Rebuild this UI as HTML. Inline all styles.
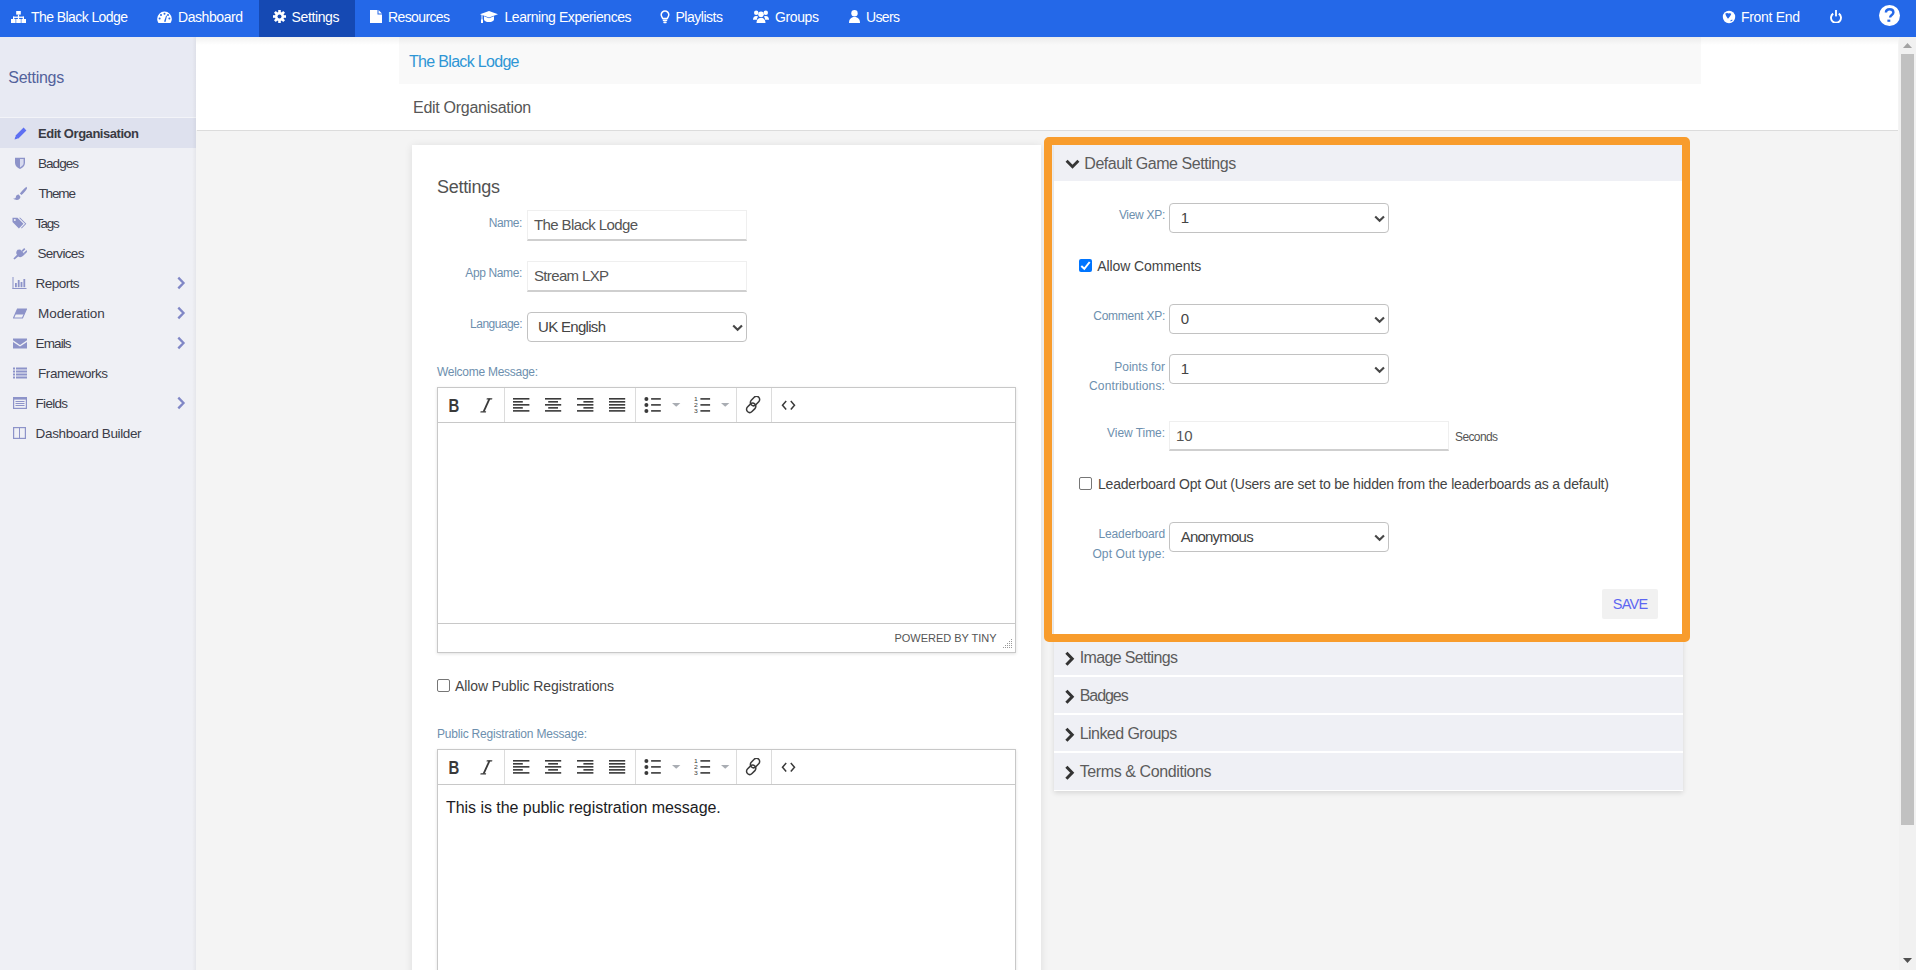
<!DOCTYPE html>
<html><head><meta charset="utf-8"><title>Edit Organisation</title>
<style>
html,body{margin:0;padding:0;width:1916px;height:970px;overflow:hidden;background:#f4f4f4;}
body{position:relative;font-family:"Liberation Sans",sans-serif;}
.t{position:absolute;white-space:nowrap;font-family:"Liberation Sans",sans-serif;}
.r{position:absolute;display:block;}
</style></head><body>
<div class="r" style="left:196px;top:37px;width:1704px;height:933px;background:#f4f4f4;"></div>
<div class="r" style="left:196px;top:37px;width:1702px;height:93px;background:#fff;"></div>
<div class="r" style="left:399px;top:37px;width:1302px;height:47px;background:#f9f9f9;"></div>
<div class="r" style="left:196px;top:37px;width:1702px;height:8px;background:linear-gradient(rgba(0,0,0,0.055),rgba(0,0,0,0));"></div>
<div class="r" style="left:197px;top:130px;width:1701px;height:1px;background:#dcdcdc;"></div>
<div class="t" style="left:409px;top:52.00px;font-size:16px;line-height:19px;color:#2e96d5;letter-spacing:-0.684px;">The Black Lodge</div>
<div class="t" style="left:413px;top:97.80px;font-size:16px;line-height:19px;color:#575757;letter-spacing:-0.284px;">Edit Organisation</div>
<div class="r" style="left:412px;top:145px;width:629px;height:900px;background:#fff;box-shadow:0 1px 8px rgba(0,0,0,0.10);"></div>
<div class="t" style="left:437px;top:175.60px;font-size:18px;line-height:22px;color:#525252;letter-spacing:-0.292px;">Settings</div>
<div class="t" style="right:1394px;top:215.60px;font-size:12px;line-height:14px;color:#6d8fae;letter-spacing:-0.436px;">Name:</div>
<div class="t" style="right:1394px;top:266.20px;font-size:12px;line-height:14px;color:#6d8fae;letter-spacing:-0.377px;">App Name:</div>
<div class="t" style="right:1394px;top:317.00px;font-size:12px;line-height:14px;color:#6d8fae;letter-spacing:-0.538px;">Language:</div>
<div class="r" style="left:527px;top:210px;width:220px;height:31px;background:#fff;box-sizing:border-box;border:1px solid #efefef;border-bottom:2px solid #cfcfcf;"></div>
<div class="r" style="left:527px;top:261px;width:220px;height:31px;background:#fff;box-sizing:border-box;border:1px solid #efefef;border-bottom:2px solid #cfcfcf;"></div>
<div class="r" style="left:527px;top:312px;width:220px;height:30px;background:#fff;box-sizing:border-box;border:1px solid #c2c2c2;border-radius:4px;"></div>
<div class="t" style="left:534px;top:215.70px;font-size:15px;line-height:18px;color:#555;letter-spacing:-0.613px;">The Black Lodge</div>
<div class="t" style="left:534px;top:266.70px;font-size:15px;line-height:18px;color:#555;letter-spacing:-0.653px;">Stream LXP</div>
<div class="t" style="left:538px;top:318.00px;font-size:15px;line-height:18px;color:#444;letter-spacing:-0.688px;">UK English</div>
<svg class="r" style="left:731.5px;top:323.5px;" width="11" height="8" viewBox="0 0 11 8"><path fill="none" stroke="#474747" stroke-width="2.1" d="M1.2 1.4l4.4 4.4 4.4-4.4"/></svg>
<div class="t" style="left:437px;top:365.30px;font-size:12px;line-height:14px;color:#6d8fae;letter-spacing:-0.276px;">Welcome Message:</div>
<div class="r" style="left:437px;top:387px;width:579px;height:266px;background:#fff;box-sizing:border-box;border:1px solid #c8c8c8;box-shadow:0 1px 3px rgba(0,0,0,0.12);"></div>
<div class="r" style="left:438px;top:422px;width:577px;height:1px;background:#c8c8c8;"></div>
<div class="r" style="left:504px;top:388px;width:1px;height:34px;background:#dcdcdc;"></div>
<div class="r" style="left:635px;top:388px;width:1px;height:34px;background:#dcdcdc;"></div>
<div class="r" style="left:736px;top:388px;width:1px;height:34px;background:#dcdcdc;"></div>
<div class="r" style="left:771px;top:388px;width:1px;height:34px;background:#dcdcdc;"></div>
<svg class="r" style="left:448px;top:397px;" width="13" height="16" viewBox="0 0 13 16"><text x="0.6" y="14.8" font-size="18.5" font-weight="700" fill="#3a3a3a" font-family="Liberation Sans" textLength="10.8" lengthAdjust="spacingAndGlyphs">B</text></svg>
<svg class="r" style="left:480px;top:397px;" width="13" height="16" viewBox="0 0 13 16"><g fill="#3a3a3a"><path d="M6.8 1.2h5.6l-0.3 1.3h-5.6z"/><path d="M0.6 14.2h5.6l-0.3 1.3h-5.6z"/><path d="M8.6 1.6h2l-6 13.2h-2z"/></g></svg>
<svg class="r" style="left:513.4px;top:398.2px;" width="17" height="15" viewBox="0 0 17 15"><g fill="#3a3a3a"><rect x="0" y="0.0" width="16.4" height="1.6"/><rect x="0" y="3.02" width="9.8" height="1.6"/><rect x="0" y="6.04" width="16.4" height="1.6"/><rect x="0" y="9.06" width="9.8" height="1.6"/><rect x="0" y="12.08" width="16.4" height="1.6"/></g></svg>
<svg class="r" style="left:545.4px;top:398.2px;" width="17" height="15" viewBox="0 0 17 15"><g fill="#3a3a3a"><rect x="0" y="0.0" width="16.2" height="1.6"/><rect x="3.2" y="3.02" width="9.8" height="1.6"/><rect x="0" y="6.04" width="16.2" height="1.6"/><rect x="3.2" y="9.06" width="9.8" height="1.6"/><rect x="0" y="12.08" width="16.2" height="1.6"/></g></svg>
<svg class="r" style="left:577.4px;top:398.2px;" width="17" height="15" viewBox="0 0 17 15"><g fill="#3a3a3a"><rect x="0" y="0.0" width="16.4" height="1.6"/><rect x="6.4" y="3.02" width="10" height="1.6"/><rect x="0" y="6.04" width="16.4" height="1.6"/><rect x="6.4" y="9.06" width="10" height="1.6"/><rect x="0" y="12.08" width="16.4" height="1.6"/></g></svg>
<svg class="r" style="left:609.4px;top:398.2px;" width="17" height="15" viewBox="0 0 17 15"><g fill="#3a3a3a"><rect x="0" y="0.0" width="16.2" height="1.6"/><rect x="0" y="3.02" width="16.2" height="1.6"/><rect x="0" y="6.04" width="16.2" height="1.6"/><rect x="0" y="9.06" width="16.2" height="1.6"/><rect x="0" y="12.08" width="16.2" height="1.6"/></g></svg>
<svg class="r" style="left:644px;top:396px;" width="18" height="17" viewBox="0 0 18 17"><g fill="#3a3a3a"><circle cx="2.4" cy="2.9" r="2"/><circle cx="2.4" cy="8.9" r="2"/><circle cx="2.4" cy="14.9" r="2"/><rect x="7.1" y="2.1" width="9.7" height="1.6"/><rect x="7.1" y="8.1" width="9.7" height="1.6"/><rect x="7.1" y="14.1" width="9.7" height="1.6"/></g></svg>
<svg class="r" style="left:672px;top:403px;" width="9" height="4" viewBox="0 0 9 4"><path fill="#a9adb3" d="M0 0h8.4L4.2 3.7z"/></svg>
<svg class="r" style="left:693.5px;top:396px;" width="17" height="17" viewBox="0 0 17 17"><g fill="#3a3a3a"><rect x="6.4" y="2.1" width="9.7" height="1.6"/><rect x="6.4" y="8.1" width="9.7" height="1.6"/><rect x="6.4" y="14.1" width="9.7" height="1.6"/></g><text x="0" y="4.6" font-size="6.2" fill="#3a3a3a" font-family="Liberation Sans" textLength="3.8" lengthAdjust="spacingAndGlyphs">1</text><text x="0" y="10.6" font-size="6.2" fill="#3a3a3a" font-family="Liberation Sans" textLength="3.8" lengthAdjust="spacingAndGlyphs">2</text><text x="0" y="16.6" font-size="6.2" fill="#3a3a3a" font-family="Liberation Sans" textLength="3.8" lengthAdjust="spacingAndGlyphs">3</text></svg>
<svg class="r" style="left:721px;top:403px;" width="9" height="4" viewBox="0 0 9 4"><path fill="#a9adb3" d="M0 0h8.4L4.2 3.7z"/></svg>
<svg class="r" style="left:744px;top:396px;" width="19" height="18" viewBox="0 0 19 18"><g fill="none" stroke="#3a3a3a" stroke-width="1.5"><rect x="-3.2" y="-2" width="6.4" height="10.5" rx="3.2" transform="translate(12.6 3.4) rotate(45) translate(0 -1)"/><rect x="-3.2" y="-8.5" width="6.4" height="10.5" rx="3.2" transform="translate(5.6 13.4) rotate(45) translate(0 1)"/></g></svg>
<svg class="r" style="left:781px;top:400px;" width="15" height="11" viewBox="0 0 15 11"><g fill="none" stroke="#3a3a3a" stroke-width="1.5"><path d="M5.2 1L1.5 5.2l3.7 4.2"/><path d="M9.8 1l3.7 4.2-3.7 4.2"/></g></svg>
<div class="r" style="left:438px;top:623px;width:577px;height:1px;background:#c8c8c8;"></div>
<div class="t" style="left:894.5px;top:631.50px;font-size:11px;line-height:13px;color:#555;letter-spacing:-0.022px;">POWERED BY TINY</div>
<svg class="r" style="left:1003px;top:639px;" width="10" height="10" viewBox="0 0 10 10"><g fill="#999"><rect x="8" y="8" width="1" height="1"/><rect x="6" y="8" width="1" height="1"/><rect x="4" y="8" width="1" height="1"/><rect x="2" y="8" width="1" height="1"/><rect x="0" y="8" width="1" height="1"/><rect x="8" y="6" width="1" height="1"/><rect x="6" y="6" width="1" height="1"/><rect x="4" y="6" width="1" height="1"/><rect x="2" y="6" width="1" height="1"/><rect x="8" y="4" width="1" height="1"/><rect x="6" y="4" width="1" height="1"/><rect x="4" y="4" width="1" height="1"/><rect x="8" y="2" width="1" height="1"/><rect x="6" y="2" width="1" height="1"/><rect x="8" y="0" width="1" height="1"/></g></svg>
<div class="r" style="left:437px;top:679px;width:13px;height:13px;background:#fff;box-sizing:border-box;border:1px solid #767676;border-radius:2px;"></div>
<div class="t" style="left:455px;top:677.80px;font-size:14px;line-height:17px;color:#444;letter-spacing:-0.081px;">Allow Public Registrations</div>
<div class="t" style="left:437px;top:727.30px;font-size:12px;line-height:14px;color:#6d8fae;letter-spacing:-0.200px;">Public Registration Message:</div>
<div class="r" style="left:437px;top:749px;width:579px;height:300px;background:#fff;box-sizing:border-box;border:1px solid #c8c8c8;box-shadow:0 1px 3px rgba(0,0,0,0.12);"></div>
<div class="r" style="left:438px;top:784px;width:577px;height:1px;background:#c8c8c8;"></div>
<div class="r" style="left:504px;top:750px;width:1px;height:34px;background:#dcdcdc;"></div>
<div class="r" style="left:635px;top:750px;width:1px;height:34px;background:#dcdcdc;"></div>
<div class="r" style="left:736px;top:750px;width:1px;height:34px;background:#dcdcdc;"></div>
<div class="r" style="left:771px;top:750px;width:1px;height:34px;background:#dcdcdc;"></div>
<svg class="r" style="left:448px;top:759px;" width="13" height="16" viewBox="0 0 13 16"><text x="0.6" y="14.8" font-size="18.5" font-weight="700" fill="#3a3a3a" font-family="Liberation Sans" textLength="10.8" lengthAdjust="spacingAndGlyphs">B</text></svg>
<svg class="r" style="left:480px;top:759px;" width="13" height="16" viewBox="0 0 13 16"><g fill="#3a3a3a"><path d="M6.8 1.2h5.6l-0.3 1.3h-5.6z"/><path d="M0.6 14.2h5.6l-0.3 1.3h-5.6z"/><path d="M8.6 1.6h2l-6 13.2h-2z"/></g></svg>
<svg class="r" style="left:513.4px;top:760.2px;" width="17" height="15" viewBox="0 0 17 15"><g fill="#3a3a3a"><rect x="0" y="0.0" width="16.4" height="1.6"/><rect x="0" y="3.02" width="9.8" height="1.6"/><rect x="0" y="6.04" width="16.4" height="1.6"/><rect x="0" y="9.06" width="9.8" height="1.6"/><rect x="0" y="12.08" width="16.4" height="1.6"/></g></svg>
<svg class="r" style="left:545.4px;top:760.2px;" width="17" height="15" viewBox="0 0 17 15"><g fill="#3a3a3a"><rect x="0" y="0.0" width="16.2" height="1.6"/><rect x="3.2" y="3.02" width="9.8" height="1.6"/><rect x="0" y="6.04" width="16.2" height="1.6"/><rect x="3.2" y="9.06" width="9.8" height="1.6"/><rect x="0" y="12.08" width="16.2" height="1.6"/></g></svg>
<svg class="r" style="left:577.4px;top:760.2px;" width="17" height="15" viewBox="0 0 17 15"><g fill="#3a3a3a"><rect x="0" y="0.0" width="16.4" height="1.6"/><rect x="6.4" y="3.02" width="10" height="1.6"/><rect x="0" y="6.04" width="16.4" height="1.6"/><rect x="6.4" y="9.06" width="10" height="1.6"/><rect x="0" y="12.08" width="16.4" height="1.6"/></g></svg>
<svg class="r" style="left:609.4px;top:760.2px;" width="17" height="15" viewBox="0 0 17 15"><g fill="#3a3a3a"><rect x="0" y="0.0" width="16.2" height="1.6"/><rect x="0" y="3.02" width="16.2" height="1.6"/><rect x="0" y="6.04" width="16.2" height="1.6"/><rect x="0" y="9.06" width="16.2" height="1.6"/><rect x="0" y="12.08" width="16.2" height="1.6"/></g></svg>
<svg class="r" style="left:644px;top:758px;" width="18" height="17" viewBox="0 0 18 17"><g fill="#3a3a3a"><circle cx="2.4" cy="2.9" r="2"/><circle cx="2.4" cy="8.9" r="2"/><circle cx="2.4" cy="14.9" r="2"/><rect x="7.1" y="2.1" width="9.7" height="1.6"/><rect x="7.1" y="8.1" width="9.7" height="1.6"/><rect x="7.1" y="14.1" width="9.7" height="1.6"/></g></svg>
<svg class="r" style="left:672px;top:765px;" width="9" height="4" viewBox="0 0 9 4"><path fill="#a9adb3" d="M0 0h8.4L4.2 3.7z"/></svg>
<svg class="r" style="left:693.5px;top:758px;" width="17" height="17" viewBox="0 0 17 17"><g fill="#3a3a3a"><rect x="6.4" y="2.1" width="9.7" height="1.6"/><rect x="6.4" y="8.1" width="9.7" height="1.6"/><rect x="6.4" y="14.1" width="9.7" height="1.6"/></g><text x="0" y="4.6" font-size="6.2" fill="#3a3a3a" font-family="Liberation Sans" textLength="3.8" lengthAdjust="spacingAndGlyphs">1</text><text x="0" y="10.6" font-size="6.2" fill="#3a3a3a" font-family="Liberation Sans" textLength="3.8" lengthAdjust="spacingAndGlyphs">2</text><text x="0" y="16.6" font-size="6.2" fill="#3a3a3a" font-family="Liberation Sans" textLength="3.8" lengthAdjust="spacingAndGlyphs">3</text></svg>
<svg class="r" style="left:721px;top:765px;" width="9" height="4" viewBox="0 0 9 4"><path fill="#a9adb3" d="M0 0h8.4L4.2 3.7z"/></svg>
<svg class="r" style="left:744px;top:758px;" width="19" height="18" viewBox="0 0 19 18"><g fill="none" stroke="#3a3a3a" stroke-width="1.5"><rect x="-3.2" y="-2" width="6.4" height="10.5" rx="3.2" transform="translate(12.6 3.4) rotate(45) translate(0 -1)"/><rect x="-3.2" y="-8.5" width="6.4" height="10.5" rx="3.2" transform="translate(5.6 13.4) rotate(45) translate(0 1)"/></g></svg>
<svg class="r" style="left:781px;top:762px;" width="15" height="11" viewBox="0 0 15 11"><g fill="none" stroke="#3a3a3a" stroke-width="1.5"><path d="M5.2 1L1.5 5.2l3.7 4.2"/><path d="M9.8 1l3.7 4.2-3.7 4.2"/></g></svg>
<div class="t" style="left:446px;top:798.40px;font-size:16px;line-height:19px;color:#1c1c24;letter-spacing:-0.046px;">This is the public registration message.</div>
<div class="r" style="left:1054px;top:141px;width:629px;height:650px;background:#fff;box-shadow:0 2px 5px rgba(0,0,0,0.12);"></div>
<div class="r" style="left:1054px;top:141px;width:629px;height:40px;background:#eff0f5;"></div>
<div class="r" style="left:1054px;top:634px;width:629px;height:41px;background:#eff0f5;"></div>
<div class="t" style="left:1079.7px;top:648.00px;font-size:16px;line-height:19px;color:#5c5c5c;letter-spacing:-0.655px;">Image Settings</div>
<svg class="r" style="left:1063.5px;top:650.5px;" width="12" height="16" viewBox="0 0 12 16"><path fill="none" stroke="#333" stroke-width="3" d="M2.4 1.8l5.8 6-5.8 6"/></svg>
<div class="r" style="left:1054px;top:677px;width:629px;height:36px;background:#eff0f5;"></div>
<div class="t" style="left:1079.7px;top:686.00px;font-size:16px;line-height:19px;color:#5c5c5c;letter-spacing:-1.059px;">Badges</div>
<svg class="r" style="left:1063.5px;top:688.5px;" width="12" height="16" viewBox="0 0 12 16"><path fill="none" stroke="#333" stroke-width="3" d="M2.4 1.8l5.8 6-5.8 6"/></svg>
<div class="r" style="left:1054px;top:715px;width:629px;height:36px;background:#eff0f5;"></div>
<div class="t" style="left:1079.7px;top:724.00px;font-size:16px;line-height:19px;color:#5c5c5c;letter-spacing:-0.545px;">Linked Groups</div>
<svg class="r" style="left:1063.5px;top:726.5px;" width="12" height="16" viewBox="0 0 12 16"><path fill="none" stroke="#333" stroke-width="3" d="M2.4 1.8l5.8 6-5.8 6"/></svg>
<div class="r" style="left:1054px;top:753px;width:629px;height:37px;background:#eff0f5;"></div>
<div class="t" style="left:1079.7px;top:762.00px;font-size:16px;line-height:19px;color:#5c5c5c;letter-spacing:-0.402px;">Terms &amp; Conditions</div>
<svg class="r" style="left:1063.5px;top:764.5px;" width="12" height="16" viewBox="0 0 12 16"><path fill="none" stroke="#333" stroke-width="3" d="M2.4 1.8l5.8 6-5.8 6"/></svg>
<svg class="r" style="left:1064.5px;top:159px;" width="15" height="11" viewBox="0 0 15 11"><path fill="none" stroke="#363636" stroke-width="2.9" d="M1.6 1.8l5.9 5.9 5.9-5.9"/></svg>
<div class="t" style="left:1084.3px;top:154.20px;font-size:16px;line-height:19px;color:#5c5c5c;letter-spacing:-0.455px;">Default Game Settings</div>
<div class="t" style="right:751px;top:208.40px;font-size:12px;line-height:14px;color:#6d8fae;letter-spacing:-0.293px;">View XP:</div>
<div class="r" style="left:1169px;top:203px;width:220px;height:30px;background:#fff;box-sizing:border-box;border:1px solid #c2c2c2;border-radius:4px;"></div>
<div class="t" style="left:1180.7px;top:208.70px;font-size:15px;line-height:18px;color:#444;">1</div>
<svg class="r" style="left:1373.5px;top:214.5px;" width="11" height="8" viewBox="0 0 11 8"><path fill="none" stroke="#474747" stroke-width="2.1" d="M1.2 1.4l4.4 4.4 4.4-4.4"/></svg>
<div class="r" style="left:1079px;top:259px;width:13px;height:13px;background:#0075ff;border-radius:2px;"></div>
<svg class="r" style="left:1079px;top:259px;" width="13" height="13" viewBox="0 0 13 13"><path fill="none" stroke="#fff" stroke-width="2" d="M2.3 7.1l3 2.7 5.4-6.8"/></svg>
<div class="t" style="left:1097.2px;top:257.80px;font-size:14px;line-height:17px;color:#444;letter-spacing:-0.077px;">Allow Comments</div>
<div class="t" style="right:751px;top:308.70px;font-size:12px;line-height:14px;color:#6d8fae;letter-spacing:-0.267px;">Comment XP:</div>
<div class="r" style="left:1169px;top:304px;width:220px;height:30px;background:#fff;box-sizing:border-box;border:1px solid #c2c2c2;border-radius:4px;"></div>
<div class="t" style="left:1180.7px;top:309.70px;font-size:15px;line-height:18px;color:#444;">0</div>
<svg class="r" style="left:1373.5px;top:315.5px;" width="11" height="8" viewBox="0 0 11 8"><path fill="none" stroke="#474747" stroke-width="2.1" d="M1.2 1.4l4.4 4.4 4.4-4.4"/></svg>
<div class="t" style="right:751px;top:359.50px;font-size:12px;line-height:14px;color:#6d8fae;letter-spacing:0.003px;">Points for</div>
<div class="t" style="right:751px;top:379.00px;font-size:12px;line-height:14px;color:#6d8fae;letter-spacing:0.136px;">Contributions:</div>
<div class="r" style="left:1169px;top:354px;width:220px;height:30px;background:#fff;box-sizing:border-box;border:1px solid #c2c2c2;border-radius:4px;"></div>
<div class="t" style="left:1180.7px;top:359.70px;font-size:15px;line-height:18px;color:#444;">1</div>
<svg class="r" style="left:1373.5px;top:365.5px;" width="11" height="8" viewBox="0 0 11 8"><path fill="none" stroke="#474747" stroke-width="2.1" d="M1.2 1.4l4.4 4.4 4.4-4.4"/></svg>
<div class="t" style="right:751px;top:426.40px;font-size:12px;line-height:14px;color:#6d8fae;letter-spacing:-0.052px;">View Time:</div>
<div class="r" style="left:1169px;top:421px;width:280px;height:30px;background:#fff;box-sizing:border-box;border:1px solid #efefef;border-bottom:2px solid #cfcfcf;"></div>
<div class="t" style="left:1176px;top:426.50px;font-size:15px;line-height:18px;color:#555;">10</div>
<div class="t" style="left:1455px;top:429.50px;font-size:12px;line-height:14px;color:#555;letter-spacing:-0.615px;">Seconds</div>
<div class="r" style="left:1079px;top:477px;width:13px;height:13px;background:#fff;box-sizing:border-box;border:1px solid #767676;border-radius:2px;"></div>
<div class="t" style="left:1098px;top:475.80px;font-size:14px;line-height:17px;color:#444;letter-spacing:-0.194px;">Leaderboard Opt Out (Users are set to be hidden from the leaderboards as a default)</div>
<div class="t" style="right:751px;top:527.00px;font-size:12px;line-height:14px;color:#6d8fae;letter-spacing:-0.145px;">Leaderboard</div>
<div class="t" style="right:751px;top:546.80px;font-size:12px;line-height:14px;color:#6d8fae;letter-spacing:0.091px;">Opt Out type:</div>
<div class="r" style="left:1169px;top:522px;width:220px;height:30px;background:#fff;box-sizing:border-box;border:1px solid #c2c2c2;border-radius:4px;"></div>
<div class="t" style="left:1180.7px;top:527.70px;font-size:15px;line-height:18px;color:#444;letter-spacing:-0.777px;">Anonymous</div>
<svg class="r" style="left:1373.5px;top:533.5px;" width="11" height="8" viewBox="0 0 11 8"><path fill="none" stroke="#474747" stroke-width="2.1" d="M1.2 1.4l4.4 4.4 4.4-4.4"/></svg>
<div class="r" style="left:1602px;top:589px;width:56px;height:30px;background:#f1f1f1;border-radius:2px;"></div>
<div class="t" style="left:1612.7px;top:595.80px;font-size:14.5px;line-height:17px;color:#5d66f2;letter-spacing:-0.704px;">SAVE</div>
<div class="r" style="left:1044px;top:137px;width:646px;height:505px;background:transparent;box-sizing:border-box;border:8px solid #f89c2c;border-radius:5px;"></div>
<div class="r" style="left:1899px;top:37px;width:17px;height:933px;background:#f1f1f1;"></div>
<div class="r" style="left:1901px;top:54px;width:13px;height:771px;background:#c1c1c1;"></div>
<svg class="r" style="left:1903px;top:43px;" width="9" height="6" viewBox="0 0 9 6"><path fill="#a3a3a3" d="M0 5h9L4.5 0z"/></svg>
<svg class="r" style="left:1903px;top:958px;" width="9" height="6" viewBox="0 0 9 6"><path fill="#505050" d="M0 0h9L4.5 5z"/></svg>
<div class="r" style="left:0px;top:37px;width:196px;height:933px;background:#eff0f5;"></div>
<div class="r" style="left:0px;top:37px;width:196px;height:80px;background:#e8eaf3;"></div>
<div class="r" style="left:0px;top:117px;width:196px;height:1px;background:#f3f4f8;"></div>
<div class="r" style="left:0px;top:118px;width:196px;height:30px;background:#dee1ee;"></div>
<div class="r" style="left:192px;top:37px;width:4px;height:933px;background:linear-gradient(90deg,rgba(0,0,0,0),rgba(0,0,0,0.045));"></div>
<div class="t" style="left:8.3px;top:68.20px;font-size:16px;line-height:19px;color:#53629b;letter-spacing:-0.266px;">Settings</div>
<div class="t" style="left:38px;top:125.50px;font-size:13px;line-height:16px;color:#3a3b44;font-weight:700;letter-spacing:-0.458px;">Edit Organisation</div>
<div class="t" style="left:38px;top:155.50px;font-size:13.5px;line-height:16px;color:#3b3c48;letter-spacing:-0.957px;">Badges</div>
<div class="t" style="left:38.4px;top:185.50px;font-size:13.5px;line-height:16px;color:#3b3c48;letter-spacing:-1.103px;">Theme</div>
<div class="t" style="left:35.2px;top:215.50px;font-size:13.5px;line-height:16px;color:#3b3c48;letter-spacing:-1.338px;">Tags</div>
<div class="t" style="left:37.4px;top:245.50px;font-size:13.5px;line-height:16px;color:#3b3c48;letter-spacing:-0.681px;">Services</div>
<div class="t" style="left:35.6px;top:275.50px;font-size:13.5px;line-height:16px;color:#3b3c48;letter-spacing:-0.544px;">Reports</div>
<div class="t" style="left:38.1px;top:305.50px;font-size:13.5px;line-height:16px;color:#3b3c48;letter-spacing:-0.093px;">Moderation</div>
<div class="t" style="left:35.6px;top:335.50px;font-size:13.5px;line-height:16px;color:#3b3c48;letter-spacing:-0.901px;">Emails</div>
<div class="t" style="left:38.1px;top:365.50px;font-size:13.5px;line-height:16px;color:#3b3c48;letter-spacing:-0.472px;">Frameworks</div>
<div class="t" style="left:35.6px;top:395.50px;font-size:13.5px;line-height:16px;color:#3b3c48;letter-spacing:-0.722px;">Fields</div>
<div class="t" style="left:35.6px;top:425.50px;font-size:13.5px;line-height:16px;color:#3b3c48;letter-spacing:-0.363px;">Dashboard Builder</div>
<svg class="r" style="left:14px;top:127px;" width="13" height="13" viewBox="0 0 13 13"><path fill="#5d6ff2" d="M9.6 0.6l2.8 2.8-8 8H1.6V8.6z M0.6 12.4l0.6-2.6 2 2z"/></svg>
<svg class="r" style="left:15px;top:157px;" width="10" height="12" viewBox="0 0 10 12"><path fill="#8d93c9" d="M0 0.7h10v5.3c0 3-2.6 5-5 6-2.4-1-5-3-5-6z"/><path fill="#d8dbef" d="M5 1.9h3.6v4.1c0 2-1.6 3.5-3.6 4.4z"/></svg>
<svg class="r" style="left:13px;top:186px;" width="14" height="14" viewBox="0 0 14 14"><path fill="#8d93c9" d="M13.5 0.8c-1.8 1.2-5 4.5-6.6 6.8l1.6 1.4c2.2-1.8 5-5 5.6-6.8z M5.8 8.4c-1.8 0-3 1.4-3 2.8 0 .8-.8 1.4-2.6 1.4 1 1 2.4 1.4 3.6 1.4 2.2 0 3.6-1.4 3.6-3.2z"/></svg>
<svg class="r" style="left:12px;top:217px;" width="15" height="12" viewBox="0 0 15 12"><path fill="#8d93c9" d="M0.5 0.8h5l6 6-4.6 4.6-6.4-6.4z M7 0.8h1.3l6 6-4.6 4.6-0.6-.6 4-4z"/><circle cx="2.8" cy="3" r="1" fill="#eff0f5"/></svg>
<svg class="r" style="left:13px;top:247px;" width="14" height="13" viewBox="0 0 14 13"><g fill="#8d93c9"><path d="M7.2 2.6l4.6 4.6-1.6 1.6c-1.6 1.6-3.6 1.8-5 .6L1.6 12.6.4 11.4l3.6-3.6c-1.2-1.4-1-3.4.6-5z"/><path d="M8.4 3.8l2.8-2.8 1.2 1.2-2.8 2.8z"/><path d="M10.6 6l2.8-2.8 1.2 1.2-2.8 2.8z"/></g></svg>
<svg class="r" style="left:12px;top:277px;" width="15" height="12" viewBox="0 0 15 12"><g fill="#8d93c9"><rect x="0.5" y="0" width="1" height="12"/><rect x="0.5" y="11" width="14" height="1"/><rect x="3" y="6" width="1.8" height="4.2"/><rect x="5.8" y="3" width="1.8" height="7.2"/><rect x="8.6" y="5" width="1.8" height="5.2"/><rect x="11.4" y="2" width="1.8" height="8.2"/></g></svg>
<svg class="r" style="left:13px;top:308px;" width="14" height="11" viewBox="0 0 14 11"><path fill="none" stroke="#8d93c9" stroke-width="1.2" d="M4.5 1h9l-4 9h-9z"/><path fill="#8d93c9" d="M4.5 1h9l-2.4 5.4h-9z"/></svg>
<svg class="r" style="left:13px;top:338px;" width="14" height="11" viewBox="0 0 14 11"><path fill="#8d93c9" d="M0 0.5h14v1.8l-7 4.6-7-4.6z M0 4l7 4.6 7-4.6v6.5h-14z"/></svg>
<svg class="r" style="left:13px;top:367px;" width="14" height="12" viewBox="0 0 14 12"><g fill="#8d93c9"><rect x="0" y="0.5" width="2" height="2"/><rect x="3" y="0.5" width="11" height="2"/><rect x="0" y="3.5" width="2" height="2"/><rect x="3" y="3.5" width="11" height="2"/><rect x="0" y="6.5" width="2" height="2"/><rect x="3" y="6.5" width="11" height="2"/><rect x="0" y="9.5" width="2" height="2"/><rect x="3" y="9.5" width="11" height="2"/></g></svg>
<svg class="r" style="left:13px;top:397px;" width="14" height="12" viewBox="0 0 14 12"><rect x="0.6" y="0.6" width="12.8" height="10.8" fill="none" stroke="#8d93c9" stroke-width="1.2"/><g fill="#8d93c9"><rect x="0" y="0" width="14" height="2.6"/><rect x="2.5" y="4" width="9" height="1"/><rect x="2.5" y="6" width="9" height="1"/><rect x="2.5" y="8" width="9" height="1"/></g></svg>
<svg class="r" style="left:13px;top:427px;" width="13" height="12" viewBox="0 0 13 12"><rect x="0.6" y="0.6" width="11.8" height="10.8" fill="none" stroke="#8d93c9" stroke-width="1.2"/><rect x="6" y="0.6" width="1" height="10.8" fill="#8d93c9"/></svg>
<svg class="r" style="left:176px;top:276px;" width="10" height="14" viewBox="0 0 10 14"><path fill="none" stroke="#8087c6" stroke-width="2.3" d="M2.3 1.6l5.2 5.4-5.2 5.4"/></svg>
<svg class="r" style="left:176px;top:306px;" width="10" height="14" viewBox="0 0 10 14"><path fill="none" stroke="#8087c6" stroke-width="2.3" d="M2.3 1.6l5.2 5.4-5.2 5.4"/></svg>
<svg class="r" style="left:176px;top:336px;" width="10" height="14" viewBox="0 0 10 14"><path fill="none" stroke="#8087c6" stroke-width="2.3" d="M2.3 1.6l5.2 5.4-5.2 5.4"/></svg>
<svg class="r" style="left:176px;top:396px;" width="10" height="14" viewBox="0 0 10 14"><path fill="none" stroke="#8087c6" stroke-width="2.3" d="M2.3 1.6l5.2 5.4-5.2 5.4"/></svg>
<div class="r" style="left:0px;top:0px;width:1916px;height:37px;background:#2468e8;"></div>
<div class="r" style="left:259px;top:0px;width:96px;height:37px;background:#1549b3;"></div>
<div class="t" style="left:31px;top:8.50px;font-size:14px;line-height:17px;color:#fff;letter-spacing:-0.574px;">The Black Lodge</div>
<div class="t" style="left:178px;top:8.50px;font-size:14px;line-height:17px;color:#fff;letter-spacing:-0.432px;">Dashboard</div>
<div class="t" style="left:291.5px;top:8.50px;font-size:14px;line-height:17px;color:#fff;letter-spacing:-0.368px;">Settings</div>
<div class="t" style="left:388px;top:8.50px;font-size:14px;line-height:17px;color:#fff;letter-spacing:-0.611px;">Resources</div>
<div class="t" style="left:504.5px;top:8.50px;font-size:14px;line-height:17px;color:#fff;letter-spacing:-0.440px;">Learning Experiences</div>
<div class="t" style="left:675.5px;top:8.50px;font-size:14px;line-height:17px;color:#fff;letter-spacing:-0.480px;">Playlists</div>
<div class="t" style="left:775px;top:8.50px;font-size:14px;line-height:17px;color:#fff;letter-spacing:-0.378px;">Groups</div>
<div class="t" style="left:866px;top:8.50px;font-size:14px;line-height:17px;color:#fff;letter-spacing:-0.637px;">Users</div>
<div class="t" style="left:1741px;top:8.50px;font-size:14px;line-height:17px;color:#fff;letter-spacing:-0.307px;">Front End</div>
<svg class="r" style="left:11px;top:11px;" width="15" height="12" viewBox="0 0 15 12"><g fill="#fff"><rect x="5.2" y="0" width="4.6" height="3.6"/><rect x="6.9" y="3.6" width="1.2" height="2.4"/><rect x="2" y="5.6" width="11" height="1.3"/><rect x="2" y="5.6" width="1.3" height="2.6"/><rect x="6.9" y="5.6" width="1.2" height="2.6"/><rect x="11.7" y="5.6" width="1.3" height="2.6"/><rect x="0" y="8" width="4.6" height="4"/><rect x="5.2" y="8" width="4.6" height="4"/><rect x="10.4" y="8" width="4.6" height="4"/></g></svg>
<svg class="r" style="left:157px;top:11px;" width="15" height="12" viewBox="0 0 15 12"><path fill="#fff" d="M7.5 0.5A7.3 7.3 0 0 0 0.2 7.8c0 1.6 0.5 3 1.3 4.2h12c0.8-1.2 1.3-2.6 1.3-4.2A7.3 7.3 0 0 0 7.5 0.5z"/><g fill="#2468e8"><circle cx="2.6" cy="7.6" r="1"/><circle cx="4" cy="4" r="1"/><circle cx="7.5" cy="2.7" r="1"/><circle cx="11" cy="4" r="1"/><circle cx="12.4" cy="7.6" r="1"/><path d="M7 10.5l2.2-6 0.8 0.3-1.5 6.2z"/></g></svg>
<svg class="r" style="left:273px;top:10px;" width="13" height="13" viewBox="0 0 13 13"><g fill="#fff" transform="translate(6.5 6.5)"><circle r="4.6"/><rect x="-1.3" y="-6.5" width="2.6" height="3" transform="rotate(0)"/><rect x="-1.3" y="-6.5" width="2.6" height="3" transform="rotate(45)"/><rect x="-1.3" y="-6.5" width="2.6" height="3" transform="rotate(90)"/><rect x="-1.3" y="-6.5" width="2.6" height="3" transform="rotate(135)"/><rect x="-1.3" y="-6.5" width="2.6" height="3" transform="rotate(180)"/><rect x="-1.3" y="-6.5" width="2.6" height="3" transform="rotate(225)"/><rect x="-1.3" y="-6.5" width="2.6" height="3" transform="rotate(270)"/><rect x="-1.3" y="-6.5" width="2.6" height="3" transform="rotate(315)"/><circle r="2" fill="#1549b3"/></g></svg>
<svg class="r" style="left:370px;top:10px;" width="12" height="13" viewBox="0 0 12 13"><path fill="#fff" d="M0 0h7.5v4.5h4.5v8.5h-12z M8.5 0l3.5 3.5h-3.5z"/></svg>
<svg class="r" style="left:480px;top:11px;" width="18" height="12" viewBox="0 0 18 12"><g fill="#fff"><path d="M9 0L18 3.3 9 6.6 0 3.3z"/><path d="M4 5.3v3.2c0 1.5 2.2 2.6 5 2.6s5-1.1 5-2.6V5.3L9 7.2z"/><rect x="1.5" y="3.5" width="1" height="5.5"/><rect x="1" y="8.5" width="2" height="3.5"/></g></svg>
<svg class="r" style="left:660px;top:10px;" width="10" height="14" viewBox="0 0 10 14"><g fill="none" stroke="#fff" stroke-width="1.5"><path d="M5 1a3.8 3.8 0 0 0-3.8 3.8c0 1.6 1.2 2.6 1.6 3.8h4.4c0.4-1.2 1.6-2.2 1.6-3.8A3.8 3.8 0 0 0 5 1z"/></g><rect x="2.8" y="9.5" width="4.4" height="1.6" fill="#fff"/><rect x="3.3" y="11.5" width="3.4" height="1.8" rx="0.8" fill="#fff"/></svg>
<svg class="r" style="left:753px;top:10px;" width="16" height="13" viewBox="0 0 16 13"><g fill="#fff"><circle cx="3.2" cy="2.8" r="2.2"/><circle cx="12.8" cy="2.8" r="2.2"/><circle cx="8" cy="4.3" r="2.8"/><path d="M0 9.5c0-2 1.2-3.6 3.2-3.6 1 0 1.6.3 2 .6-.8.9-1.3 2-1.3 3.2H0z"/><path d="M16 9.5c0-2-1.2-3.6-3.2-3.6-1 0-1.6.3-2 .6.8.9 1.3 2 1.3 3.2H16z"/><path d="M3.5 13c0-3 1.5-5.2 4.5-5.2s4.5 2.2 4.5 5.2z"/></g></svg>
<svg class="r" style="left:849px;top:10px;" width="11" height="13" viewBox="0 0 11 13"><g fill="#fff"><circle cx="5.5" cy="3.2" r="3.2"/><path d="M0 13c0-3.6 1.8-6 5.5-6s5.5 2.4 5.5 6z"/></g></svg>
<svg class="r" style="left:1722px;top:10px;" width="14" height="14" viewBox="0 0 14 14"><circle cx="7" cy="7" r="6.2" fill="#fff"/><path fill="#2468e8" d="M3.3 3.6c1-.9 2.5-.8 3.5-.1.8-.5 1.8-.4 2.5.2-.5 1.7-1.8 3.2-3.3 5-1.3-1.4-2.3-3-2.7-5.1z M8.3 10.4l1.9-.9.3 1.1-1.9.9z"/></svg>
<svg class="r" style="left:1829px;top:9px;" width="14" height="14" viewBox="0 0 14 14"><path fill="none" stroke="#fff" stroke-width="1.9" d="M4.2 4.6A5 5 0 1 0 9.8 4.6"/><rect x="6.1" y="1" width="1.8" height="6.4" fill="#fff"/></svg>
<svg class="r" style="left:1879px;top:5px;" width="21" height="21" viewBox="0 0 21 21"><circle cx="10.5" cy="10.5" r="10.5" fill="#fff"/><path fill="none" stroke="#2468e8" stroke-width="2.4" d="M6.9 7.6c0-2 1.6-3.3 3.7-3.3 2.2 0 3.8 1.3 3.8 3.2 0 2.4-3.3 2.6-3.3 5"/><rect x="8.4" y="14.6" width="2.9" height="2.2" fill="#2468e8"/></svg>
</body></html>
